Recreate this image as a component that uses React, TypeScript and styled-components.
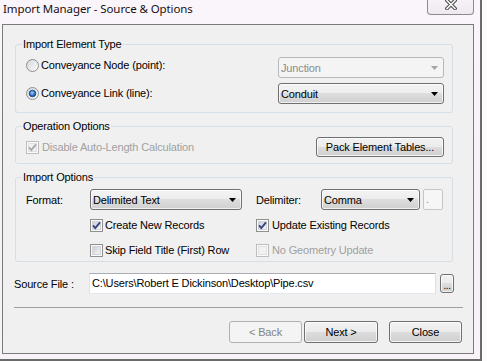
import React, { useId } from "react";
import styled, { createGlobalStyle, css } from "styled-components";

const GlobalStyle = createGlobalStyle`
  html, body { margin: 0; padding: 0; background: #fbfbfc; }
  body { font-family: "Liberation Sans", Arial, sans-serif; font-size: 11px; letter-spacing: -0.15px; color: #000; }
  #root { width: 487px; height: 361px; overflow: hidden; }
`;

const Window = styled.div`
  box-sizing: border-box;
  width: 482px;
  height: 361px;
  padding-left: 2px;
  border-right: 2px solid #6a6a6a;
  border-bottom: 2px solid #6a6a6a;
  background: linear-gradient(180deg, #faf5fa 0%, #f6f0f7 60%, #f8f3f8 100%);
  display: flex;
  flex-direction: column;
`;

const TitleBar = styled.div`
  height: 24px;
  display: flex;
  align-items: flex-start;
  padding-right: 6px;
`;

const Title = styled.div`
  font-family: "Noto Sans", "Open Sans", sans-serif;
  font-size: 11.5px;
  letter-spacing: -0.1px;
  line-height: 16px;
  padding-top: 1px;
  padding-left: 1px;
  color: #1a0f0f;
`;

const CloseButton = styled.div`
  box-sizing: border-box;
  margin-left: auto;
  width: 47px;
  height: 15px;
  border: 1px solid #8c8c8c;
  border-top: none;
  border-radius: 0 0 4px 4px;
  background: linear-gradient(180deg, #f7f2f7 0%, #efe9ef 100%);
  display: flex;
  justify-content: center;
  align-items: flex-start;
  padding-left: 1px;
`;

const Client = styled.div`
  box-sizing: border-box;
  width: 472px;
  height: 330px;
  border: 1px solid #7b7b7b;
  background: #f0f0f0;
  padding: 13px 11px 10px 11px;
  display: flex;
  flex-direction: column;
`;

const Group = styled.fieldset<{ $mt?: number }>`
  box-sizing: border-box;
  width: 438px;
  min-inline-size: 0;
  margin: ${(p) => p.$mt ?? 0}px 0 0 1px;
  padding: 0;
  border: 1px solid #d5dfe5;
  border-radius: 3px;
`;

const Legend = styled.legend`
  margin-left: 6px;
  padding: 0 1px;
  font-size: 11px;
  line-height: 13px;
  color: #000;
`;

const TypeBody = styled.div`
  display: flex;
  justify-content: space-between;
  padding: 6px 8px 8px 10px;
`;

const RadioColumn = styled.div`
  display: flex;
  flex-direction: column;
  gap: 15px;
  padding-top: 2px;
`;

const ComboColumn = styled.div`
  display: flex;
  flex-direction: column;
  gap: 5px;
`;

const OperationBody = styled.div`
  display: flex;
  justify-content: space-between;
  align-items: center;
  padding: 4px 8px 6px 10px;
`;

const ImportBody = styled.div`
  display: flex;
  flex-direction: column;
  padding: 5px 0 4px 10px;
`;

const FieldRow = styled.div<{ $h: number; $mt?: number }>`
  display: flex;
  align-items: center;
  height: ${(p) => p.$h}px;
  margin-top: ${(p) => p.$mt ?? 0}px;
`;

const Cell = styled.div<{ $w: number }>`
  width: ${(p) => p.$w}px;
  flex: none;
  display: flex;
  align-items: center;
`;

const OptionRow = styled.div<{ $gap?: number }>`
  display: flex;
  align-items: center;
  gap: ${(p) => p.$gap ?? 3}px;
  height: 13px;
`;

const Label = styled.span<{ $disabled?: boolean }>`
  font-size: 11px;
  line-height: 13px;
  white-space: nowrap;
  color: ${(p) => (p.$disabled ? "#a0a0a0" : "#000")};
`;

const ComboFrame = styled.div<{ $w: number; $disabled?: boolean }>`
  box-sizing: border-box;
  width: ${(p) => p.$w}px;
  height: 21px;
  flex: none;
  display: flex;
  align-items: center;
  justify-content: space-between;
  padding: 0 5px 0 2px;
  border: 1px solid #707070;
  border-radius: 3px;
  background: linear-gradient(180deg, #f4f4f4 0%, #ececec 50%, #dedede 50%, #d0d0d0 100%);
  box-shadow: inset 0 0 0 1px rgba(255, 255, 255, 0.7);
  color: #000;
  white-space: nowrap;
  ${(p) =>
    p.$disabled &&
    css`
      border-color: #b5b9bc;
      background: #f4f4f4;
      box-shadow: none;
      color: #8d8d8d;
    `}
`;

const DotBox = styled.div`
  box-sizing: border-box;
  width: 20px;
  height: 21px;
  margin-left: 3px;
  border: 1px solid #c6c6c6;
  border-radius: 2px;
  background: #f6f6f6;
  color: #8d8d8d;
  padding-left: 2px;
  line-height: 19px;
`;

const PushButton = styled.button<{ $w: number; $h: number; $ml?: number }>`
  box-sizing: border-box;
  width: ${(p) => p.$w}px;
  height: ${(p) => p.$h}px;
  margin-left: ${(p) => p.$ml ?? 0}px;
  padding: 0;
  font-family: "Liberation Sans", Arial, sans-serif;
  font-size: 11px;
  letter-spacing: -0.15px;
  color: #000;
  border: 1px solid #707070;
  border-radius: 3px;
  background: linear-gradient(180deg, #f2f2f2 0%, #ebebeb 50%, #dddddd 50%, #cfcfcf 100%);
  box-shadow: inset 0 0 0 1px rgba(255, 255, 255, 0.75);
  &:disabled {
    border-color: #adb2b5;
    background: #f4f4f4;
    box-shadow: none;
    color: #838383;
  }
`;

const FieldLabel = styled.div<{ $w: number }>`
  width: ${(p) => p.$w}px;
  flex: none;
  white-space: nowrap;
`;

const SourceRow = styled.div`
  display: flex;
  align-items: center;
  height: 21px;
  margin-top: 11px;
`;

const TextBox = styled.div`
  box-sizing: border-box;
  width: 347px;
  height: 21px;
  border: 1px solid #abadb3;
  border-color: #abadb3 #dbdfe6 #e3e9ef #e2e3ea;
  background: #fff;
  padding-left: 2px;
  line-height: 19px;
  white-space: nowrap;
`;

const BrowseButton = styled(PushButton)`
  margin-left: 4px;
  font-size: 10px;
  line-height: 10px;
  padding-top: 4px;
  letter-spacing: -0.5px;
`;

const Separator = styled.div`
  width: 449px;
  margin-top: 13px;
  border-top: 1px solid #a0a0a0;
`;

const ButtonRow = styled.div`
  display: flex;
  justify-content: flex-end;
  margin-top: 13px;
`;

const Arrow = ({ disabled }: { disabled?: boolean }) => (
  <svg width="7" height="4" viewBox="0 0 7 4">
    <polygon points="0,0 7,0 3.5,4" fill={disabled ? "#a3a3a3" : "#000"} />
  </svg>
);

const Combo = ({ width, value, disabled }: { width: number; value: string; disabled?: boolean }) => (
  <ComboFrame $w={width} $disabled={disabled}>
    <span>{value}</span>
    <Arrow disabled={disabled} />
  </ComboFrame>
);

const Checkbox = ({ checked, disabled }: { checked?: boolean; disabled?: boolean }) => {
  const id = useId().replace(/:/g, "");
  return (
    <svg width="13" height="13" viewBox="0 0 13 13" style={{ flex: "none" }}>
      <defs>
        <linearGradient id={`cb${id}`} x1="0" y1="0" x2="1" y2="1">
          <stop offset="0" stopColor="#c9cdd3" />
          <stop offset="1" stopColor="#f7f7f7" />
        </linearGradient>
      </defs>
      <rect x="0.5" y="0.5" width="12" height="12" fill="#fbfbfb" stroke={disabled ? "#bdbdbd" : "#8e8f8f"} />
      <rect
        x="2.5"
        y="2.5"
        width="8"
        height="8"
        fill={disabled ? "#f2f2f2" : `url(#cb${id})`}
        stroke={disabled ? "#e0e0e0" : "#d2d4d8"}
      />
      {checked && (
        <path
          d="M3 6.3 L5.3 9 L10 3.3"
          fill="none"
          stroke={disabled ? "#a8a8a8" : "#34467f"}
          strokeWidth="1.9"
          strokeLinejoin="miter"
        />
      )}
    </svg>
  );
};

const Radio = ({ checked }: { checked?: boolean }) => {
  const id = useId().replace(/:/g, "");
  return (
    <svg width="13" height="13" viewBox="0 0 13 13" style={{ flex: "none" }}>
      <defs>
        <linearGradient id={`rb${id}`} x1="0" y1="0" x2="1" y2="1">
          <stop offset="0" stopColor="#d4d6da" />
          <stop offset="1" stopColor="#fbfbfb" />
        </linearGradient>
        <radialGradient id={`rd${id}`} cx="0.45" cy="0.4" r="0.6">
          <stop offset="0" stopColor="#a9d6fb" />
          <stop offset="0.55" stopColor="#3b7fd0" />
          <stop offset="1" stopColor="#133f86" />
        </radialGradient>
      </defs>
      <circle cx="6.5" cy="6.5" r="6" fill={`url(#rb${id})`} stroke="#8e8f8f" />
      {checked && <circle cx="6.5" cy="6.5" r="3.3" fill={`url(#rd${id})`} stroke="#1b3f7c" strokeWidth="0.8" />}
    </svg>
  );
};

const CloseGlyph = () => (
  <svg width="12" height="10" viewBox="0 0 12 10">
    <path d="M2 0.5 L10 8.5 M10 0.5 L2 8.5" stroke="#4a4a4a" strokeWidth="3.6" strokeLinecap="square" />
    <path d="M2 0.5 L10 8.5 M10 0.5 L2 8.5" stroke="#f4f4f4" strokeWidth="1.6" strokeLinecap="square" />
  </svg>
);

export default function App() {
  return (
    <>
      <GlobalStyle />
      <Window>
        <TitleBar>
          <Title>Import Manager - Source &amp; Options</Title>
          <CloseButton aria-label="Close">
            <CloseGlyph />
          </CloseButton>
        </TitleBar>
        <Client>
          <Group>
            <Legend>Import Element Type</Legend>
            <TypeBody>
              <RadioColumn>
                <OptionRow $gap={2}>
                  <Radio />
                  <Label>Conveyance Node (point):</Label>
                </OptionRow>
                <OptionRow $gap={2}>
                  <Radio checked />
                  <Label>Conveyance Link (line):</Label>
                </OptionRow>
              </RadioColumn>
              <ComboColumn>
                <Combo width={166} value="Junction" disabled />
                <Combo width={166} value="Conduit" />
              </ComboColumn>
            </TypeBody>
          </Group>

          <Group $mt={7}>
            <Legend>Operation Options</Legend>
            <OperationBody>
              <OptionRow>
                <Checkbox checked disabled />
                <Label $disabled>Disable Auto-Length Calculation</Label>
              </OptionRow>
              <PushButton $w={128} $h={20}>
                Pack Element Tables...
              </PushButton>
            </OperationBody>
          </Group>

          <Group $mt={7}>
            <Legend>Import Options</Legend>
            <ImportBody>
              <FieldRow $h={21}>
                <FieldLabel $w={64}>Format:</FieldLabel>
                <Cell $w={166}>
                  <Combo width={152} value="Delimited Text" />
                </Cell>
                <FieldLabel $w={65}>Delimiter:</FieldLabel>
                <Combo width={99} value="Comma" />
                <DotBox>.</DotBox>
              </FieldRow>
              <FieldRow $h={13} $mt={9}>
                <FieldLabel $w={64} />
                <Cell $w={166}>
                  <OptionRow $gap={2}>
                    <Checkbox checked />
                    <Label>Create New Records</Label>
                  </OptionRow>
                </Cell>
                <OptionRow>
                  <Checkbox checked />
                  <Label>Update Existing Records</Label>
                </OptionRow>
              </FieldRow>
              <FieldRow $h={13} $mt={12}>
                <FieldLabel $w={64} />
                <Cell $w={166}>
                  <OptionRow $gap={2}>
                    <Checkbox />
                    <Label>Skip Field Title (First) Row</Label>
                  </OptionRow>
                </Cell>
                <OptionRow>
                  <Checkbox disabled />
                  <Label $disabled>No Geometry Update</Label>
                </OptionRow>
              </FieldRow>
            </ImportBody>
          </Group>

          <SourceRow>
            <FieldLabel $w={75}>Source File :</FieldLabel>
            <TextBox>C:\Users\Robert E Dickinson\Desktop\Pipe.csv</TextBox>
            <BrowseButton $w={14} $h={19}>...</BrowseButton>
          </SourceRow>

          <Separator />

          <ButtonRow>
            <PushButton $w={73} $h={22} disabled>
              &lt; Back
            </PushButton>
            <PushButton $w={74} $h={22} $ml={2}>
              Next &gt;
            </PushButton>
            <PushButton $w={73} $h={22} $ml={11}>
              Close
            </PushButton>
          </ButtonRow>
        </Client>
      </Window>
    </>
  );
}
